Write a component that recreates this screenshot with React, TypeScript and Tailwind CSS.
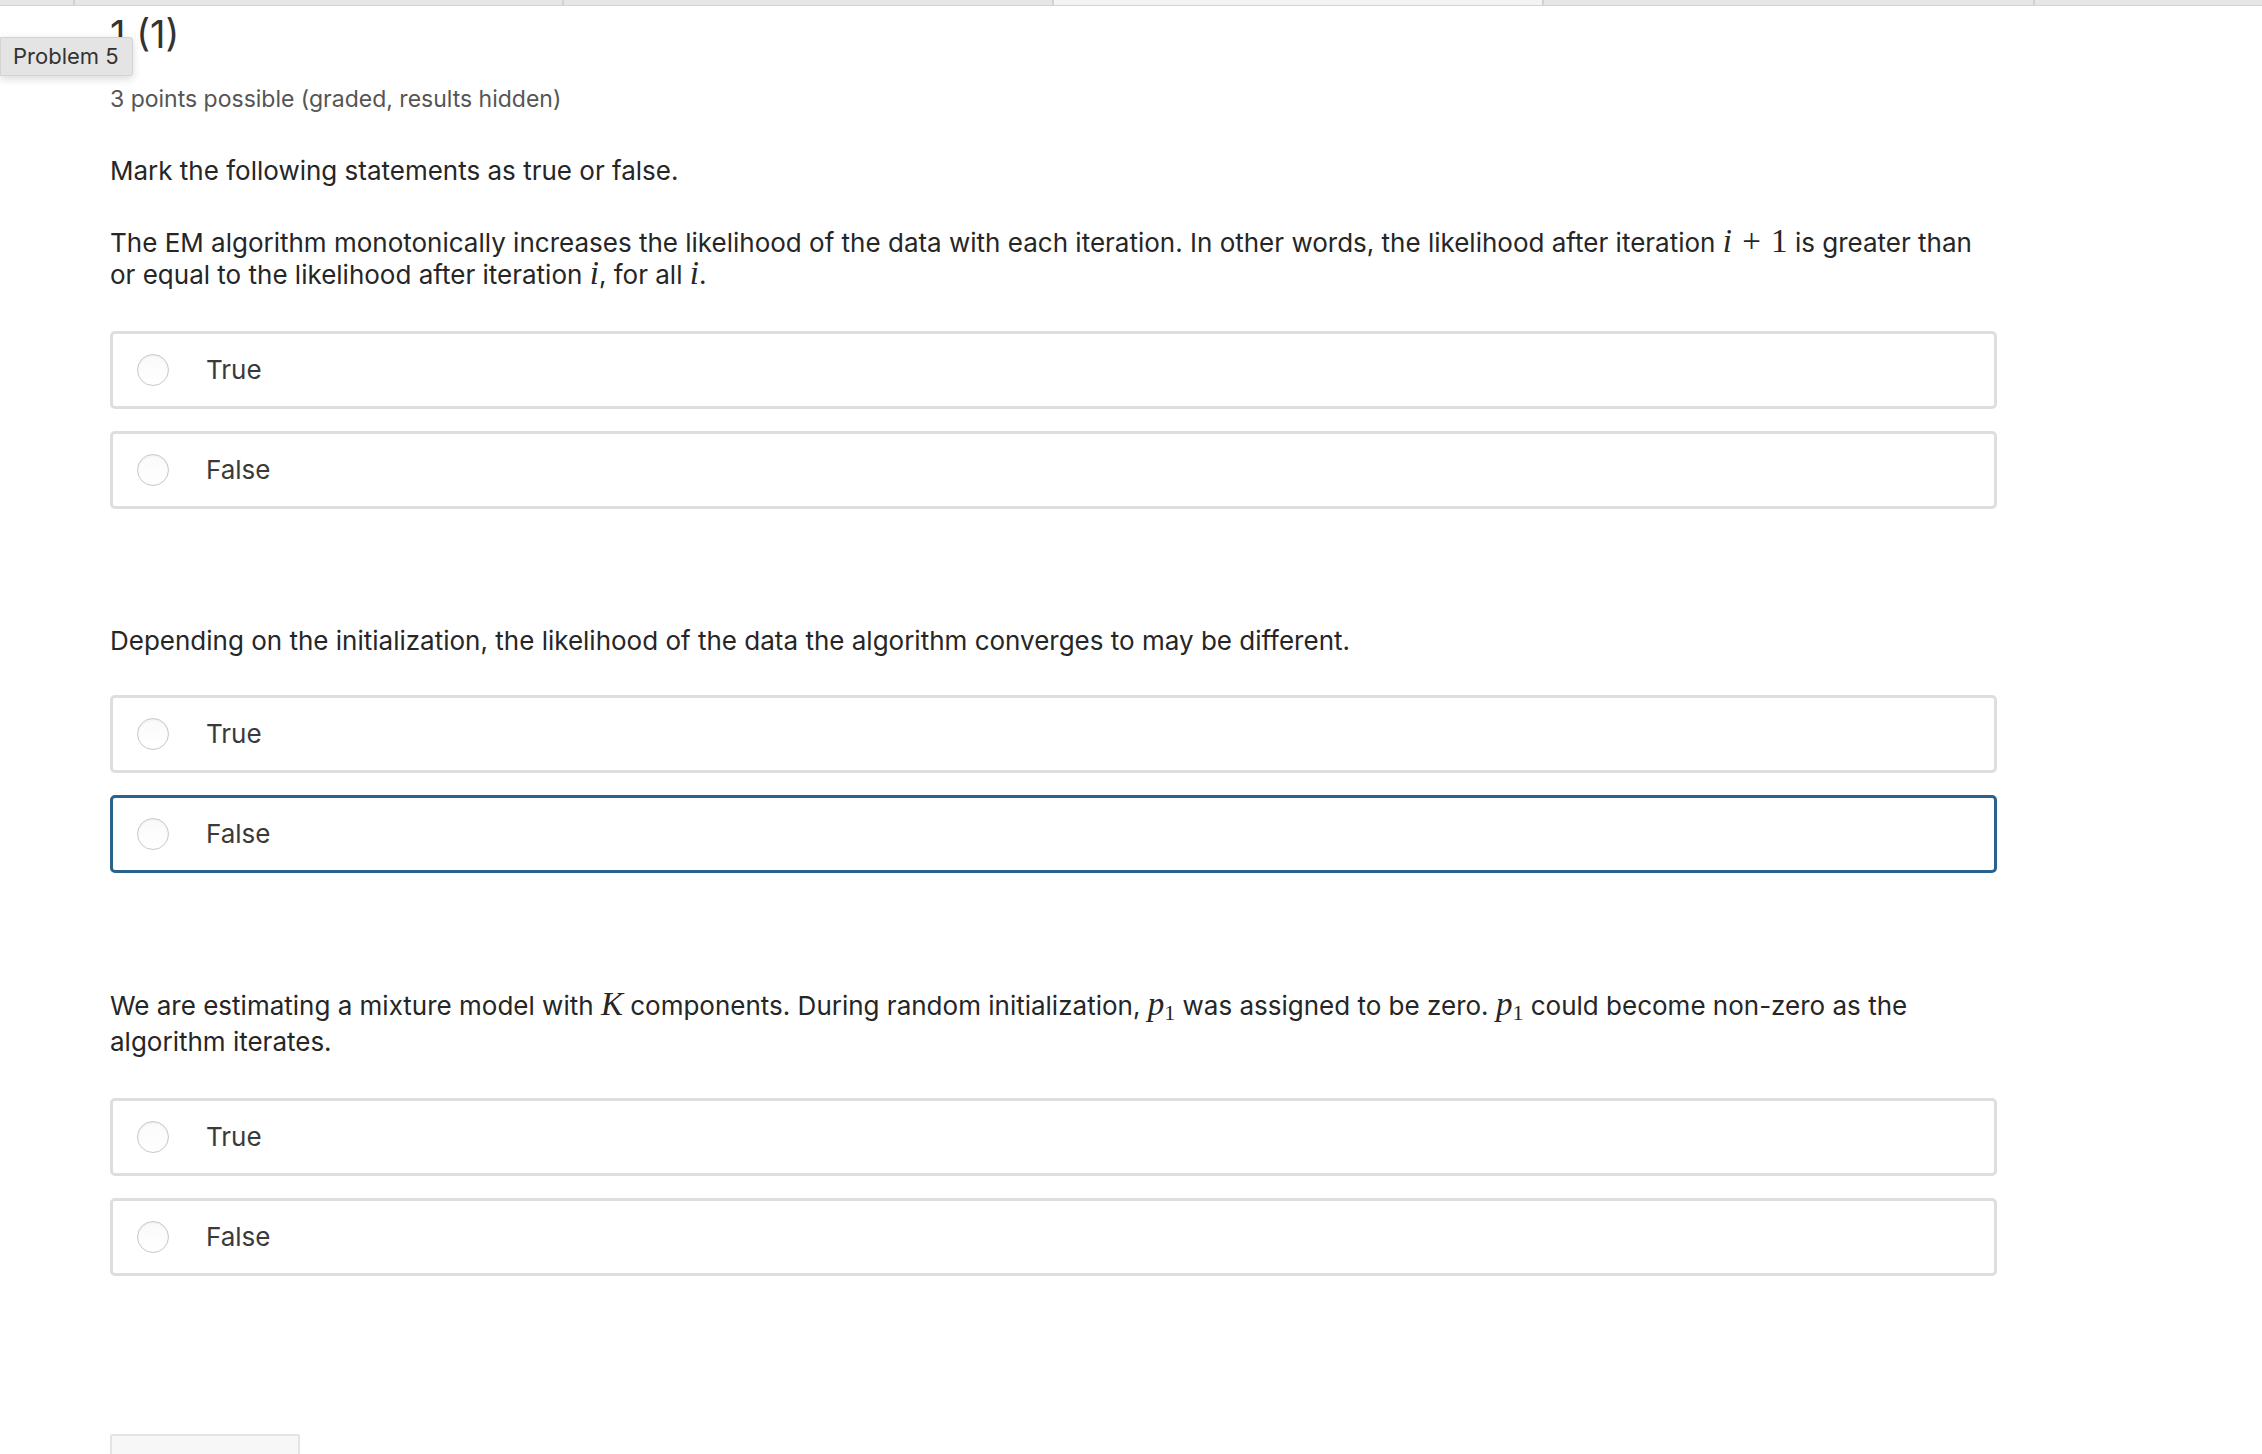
import React, { useState } from 'react';

const body = "font-['Inter','Noto_Sans',sans-serif]";
const mathFont = "font-['Liberation_Serif','DejaVu_Serif',serif]";

const M: React.FC<{ children: React.ReactNode; italic?: boolean }> = ({ children, italic = true }) => (
    <span className={`${mathFont} text-[1.27em] leading-[20px] ${italic ? 'italic' : ''}`}>{children}</span>
);

const Sub: React.FC = () => (
    <span className={`${mathFont} text-[22px] leading-[14px] relative top-[5px]`}>1</span>
);

const Option: React.FC<{ label: string; focused?: boolean; onClick: () => void; checked: boolean }> = ({ label, focused, onClick, checked }) => (
    <label
        onClick={onClick}
        className={`flex items-center h-[78px] w-[1887px] rounded-[5px] border-[3px] bg-white cursor-pointer ${
            focused ? 'border-[#29638b]' : 'border-[#dedede]'
        }`}
    >
        <span className="ml-[24px] w-[32px] h-[32px] rounded-full border border-[#c9c9c9] bg-gradient-to-b from-[#fafafa] to-white shadow-[inset_0_1px_2px_rgba(0,0,0,0.06)] flex items-center justify-center">
            {checked && <span className="w-[14px] h-[14px] rounded-full bg-[#29638b]" />}
        </span>
        <span className="ml-[37px] text-[26px] text-[#3a3a3a] leading-none">{label}</span>
    </label>
);

const Question: React.FC<{ id: string; focusFalse?: boolean; answers: Record<string, string>; setAnswer: (id: string, v: string) => void }> = ({ id, focusFalse, answers, setAnswer }) => (
    <div className="flex flex-col gap-[22px]">
        <Option label="True" checked={answers[id] === 'true'} onClick={() => setAnswer(id, 'true')} />
        <Option label="False" focused={focusFalse} checked={answers[id] === 'false'} onClick={() => setAnswer(id, 'false')} />
    </div>
);

export default function App() {
    const [answers, setAnswers] = useState<Record<string, string>>({});
    const setAnswer = (id: string, v: string) => setAnswers(prev => ({ ...prev, [id]: v }));

    return (
        <div className={`relative min-h-screen bg-white ${body} text-[#262626]`}>
            {/* cut-off nav strip at the top */}
            <div className="flex h-[6px] border-b border-[#d4d4d4]">
                <div className="w-[75px] bg-[#e6e6e6] border-r-2 border-[#d2d2d2]" />
                <div className="w-[489px] bg-[#e6e6e6] border-r-2 border-[#d2d2d2]" />
                <div className="w-[490px] bg-[#e6e6e6] border-r-2 border-[#d2d2d2]" />
                <div className="w-[490px] bg-[#f3f3f3] border-r-2 border-[#d2d2d2]" />
                <div className="w-[491px] bg-[#e6e6e6] border-r-2 border-[#d2d2d2]" />
                <div className="flex-1 bg-[#e6e6e6]" />
            </div>

            <div className="absolute left-0 top-[37px] h-[39px] w-[133px] flex items-center pl-[12px] bg-[#e4e4e4] border border-[#d3d3d3] rounded-r-[3px] shadow-[0_3px_8px_rgba(0,0,0,0.15)] text-[22px] text-[#333]">
                Problem 5
            </div>

            <div className="pl-[110px]">
                <h2 className="mt-[8px] text-[38px] leading-[40px] text-[#333] font-normal">1 (1)</h2>
                <p className="mt-[30px] text-[23px] leading-[30px] text-[#555]">3 points possible (graded, results hidden)</p>

                <p className="mt-[41px] text-[26px] leading-[32px]">Mark the following statements as true or false.</p>

                <p className="mt-[40px] w-[1887px] text-[26px] leading-[32px]">
                    The EM algorithm monotonically increases the likelihood of the data with each iteration. In other words, the likelihood after iteration{' '}
                    <M>i</M>
                    <M italic={false}>
                        {' '}
                        <span className="mx-[2px]">+</span> 1
                    </M>{' '}
                    is greater than or equal to the likelihood after iteration <M>i</M>, for all <M>i</M>.
                </p>
                <div className="mt-[40px]">
                    <Question id="q1" answers={answers} setAnswer={setAnswer} />
                </div>

                <p className="mt-[116px] text-[26px] leading-[32px]">
                    Depending on the initialization, the likelihood of the data the algorithm converges to may be different.
                </p>
                <div className="mt-[38px]">
                    <Question id="q2" focusFalse answers={answers} setAnswer={setAnswer} />
                </div>

                <p className="mt-[115px] w-[1887px] text-[26px] leading-[36px]">
                    We are estimating a mixture model with <M>K</M> components. During random initialization,{' '}
                    <M>p</M>
                    <Sub /> was assigned to be zero. <M>p</M>
                    <Sub /> could become non-zero as the algorithm iterates.
                </p>
                <div className="mt-[38px]">
                    <Question id="q3" answers={answers} setAnswer={setAnswer} />
                </div>

                <div className="mt-[158px] h-[60px] w-[190px] bg-[#f7f7f7] border-2 border-[#e4e4e4] rounded-[2px]" />
            </div>
        </div>
    );
}
